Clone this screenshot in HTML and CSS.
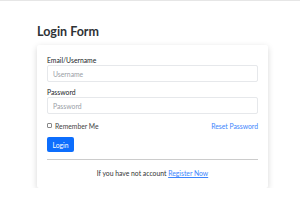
FILE: index.html
```html
<!DOCTYPE html>
<html lang="en">
<head>
  <meta charset="UTF-8">
  <meta name="viewport" content="width=device-width, initial-scale=1.0">
  <title>Login Form</title>
  <link rel="stylesheet" href="styles.css">
</head>
<body>
  <div class="topbar"></div>
  <div class="container">
    <h3 class="title">Login Form</h3>
    <div class="card">
      <form class="login-form">
        <label class="label" for="user">Email/Username</label>
        <input type="text" id="user" class="input" placeholder="Username" />

        <label class="label" for="pass">Password</label>
        <input type="password" id="pass" class="input" placeholder="Password" />

        <div class="row">
          <label class="check"><input type="checkbox" class="checkbox" /> Remember Me</label>
          <a href="#" class="link">Reset Password</a>
        </div>

        <button type="button" class="btn">Login</button>
      </form>
      <hr class="divider" />
      <p class="register">If you have not account <a href="#" class="link underline">Register Now</a></p>
    </div>
  </div>
</body>
</html>
```

FILE: styles.css
```css
body {
  margin: 0;
  background-color: #fff;
  font-family: 'Lato', 'Open Sans', sans-serif;
  color: #212529;
}

.topbar {
  height: 1px;
  background-color: #e6e6e6;
}

.container {
  width: 231px;
  margin-left: 37px;
  padding-top: 23px;
}

.title {
  margin: 0 0 5px 0;
  font-size: 12.5px;
  font-weight: 700;
  line-height: 16px;
  color: #2e3236;
}

.card {
  background-color: #fff;
  box-shadow: 0 2px 6px rgba(0, 0, 0, 0.16);
  border-radius: 2px;
  padding: 11px 10px 10px 10px;
}

.login-form {
  display: flex;
  flex-direction: column;
}

.label {
  font-size: 6.8px;
  line-height: 9px;
}

.input {
  height: 17px;
  box-sizing: border-box;
  border: 1px solid #e6e8eb;
  border-radius: 2px;
  padding: 0 5px;
  font-family: inherit;
  font-size: 6.8px;
  margin-bottom: 6px;
}

.input::placeholder {
  color: #9aa0a6;
}

.row {
  display: flex;
  justify-content: space-between;
  align-items: center;
  height: 9px;
  font-size: 6.8px;
  margin: 1px 0 7px 0;
}

.check {
  display: flex;
  align-items: center;
  gap: 3px;
  color: #444;
}

.checkbox {
  appearance: none;
  width: 5px;
  height: 5px;
  margin: 0;
  border: 1px solid #888;
  border-radius: 1px;
  background-color: #fff;
}

.link {
  color: #3d85fd;
  text-decoration: none;
}

.underline {
  text-decoration: underline;
}

.btn {
  align-self: flex-start;
  width: 27px;
  height: 15px;
  padding: 0;
  border: none;
  border-radius: 2px;
  background-color: #0d6efd;
  color: #fff;
  font-family: inherit;
  font-size: 6.8px;
}

.divider {
  border: none;
  border-top: 1px solid #ccc;
  margin: 7px 0 8px 0;
}

.register {
  margin: 0;
  text-align: center;
  font-size: 6.8px;
  line-height: 10px;
  color: #333;
}
```
